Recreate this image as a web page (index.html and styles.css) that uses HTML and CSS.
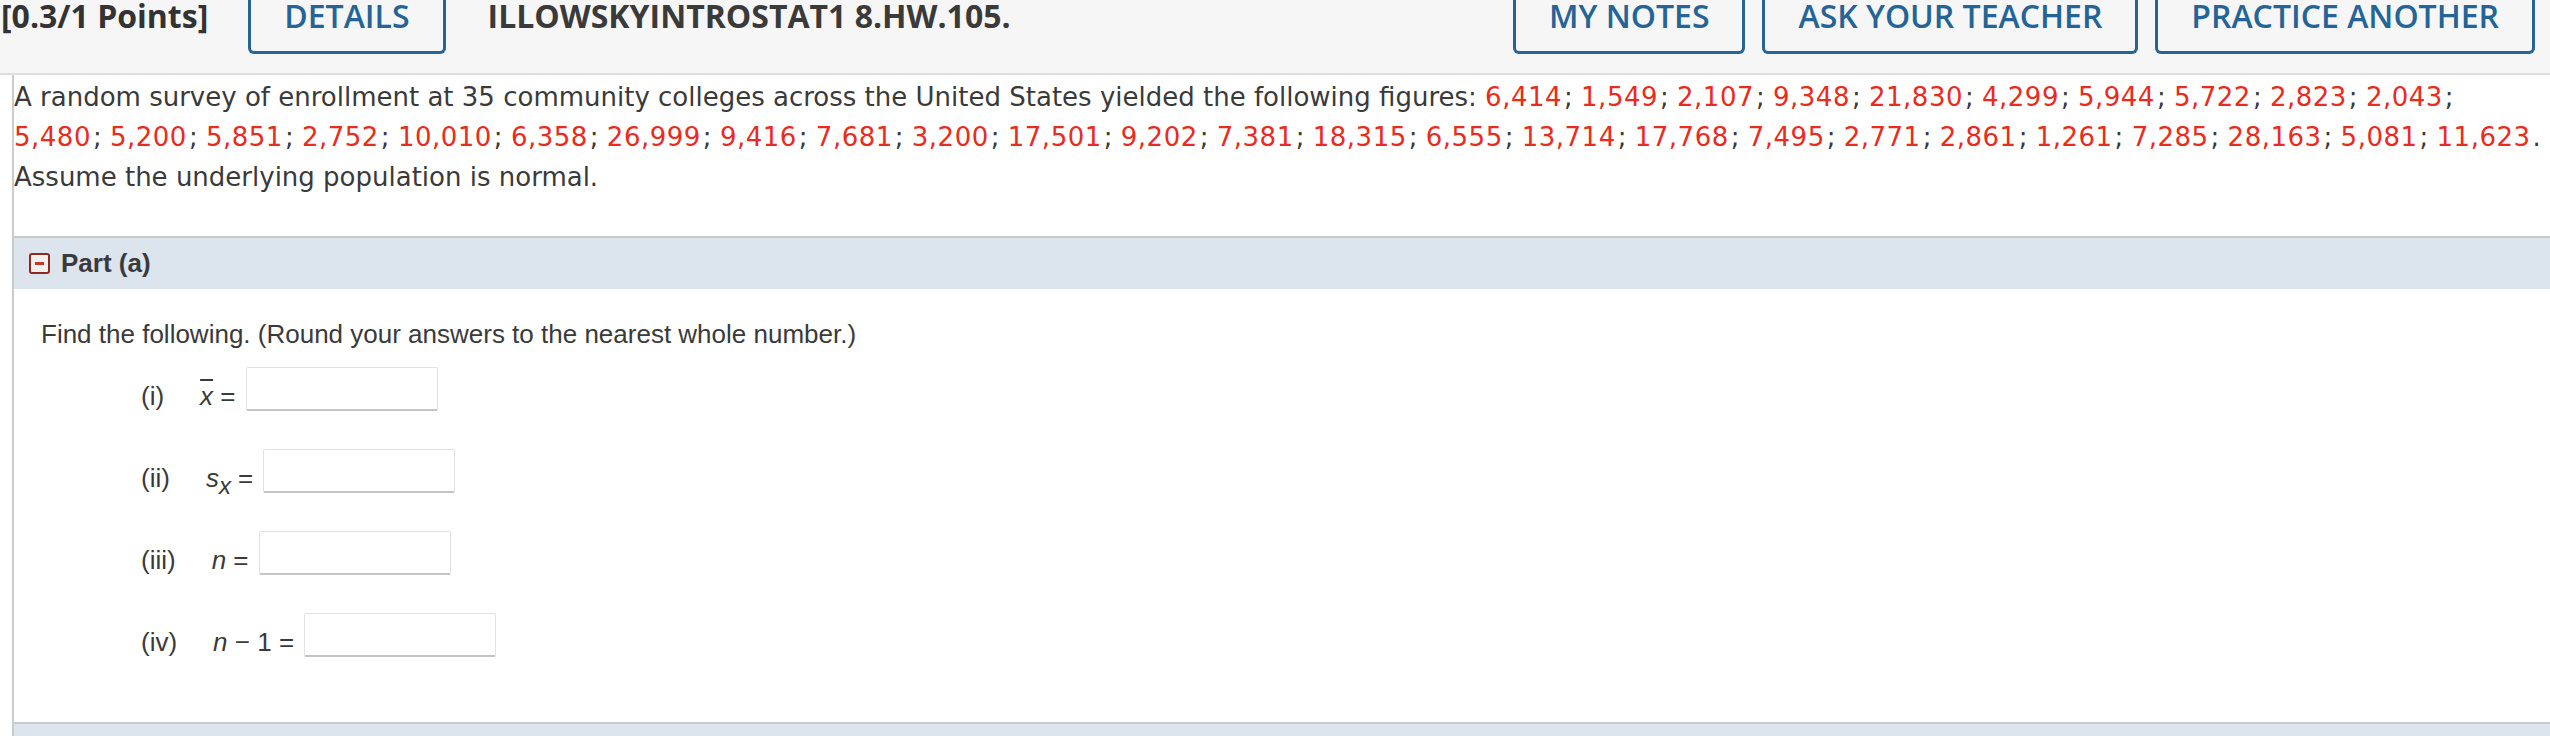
FILE: index.html
```html
<!DOCTYPE html>
<html lang="en">
<head>
  <meta charset="UTF-8">
  <meta name="viewport" content="width=device-width, initial-scale=1.0">
  <title>ILLOWSKYINTROSTAT1 8.HW.105.</title>
  <link rel="stylesheet" href="styles.css">
</head>
<body>

  <div class="qhead">
    <span class="points">[0.3/1 Points]</span>
    <a class="hbtn details" href="#">DETAILS</a>
    <span class="qid">ILLOWSKYINTROSTAT1 8.HW.105.</span>
    <div class="hactions">
      <a class="hbtn" href="#">MY NOTES</a>
      <a class="hbtn" href="#">ASK YOUR TEACHER</a>
      <a class="hbtn" href="#">PRACTICE ANOTHER</a>
    </div>
  </div>

  <div class="qbody">
    <p class="stem">
      A random survey of enrollment at 35 community colleges across the United States yielded the following figures:
      <span class="num">6,414</span>; <span class="num">1,549</span>; <span class="num">2,107</span>; <span class="num">9,348</span>; <span class="num">21,830</span>; <span class="num">4,299</span>; <span class="num">5,944</span>; <span class="num">5,722</span>; <span class="num">2,823</span>; <span class="num">2,043</span>;<br>
      <span class="num">5,480</span>; <span class="num">5,200</span>; <span class="num">5,851</span>; <span class="num">2,752</span>; <span class="num">10,010</span>; <span class="num">6,358</span>; <span class="num">26,999</span>; <span class="num">9,416</span>; <span class="num">7,681</span>; <span class="num">3,200</span>; <span class="num">17,501</span>; <span class="num">9,202</span>; <span class="num">7,381</span>; <span class="num">18,315</span>; <span class="num">6,555</span>; <span class="num">13,714</span>; <span class="num">17,768</span>; <span class="num">7,495</span>; <span class="num">2,771</span>; <span class="num">2,861</span>; <span class="num">1,261</span>; <span class="num">7,285</span>; <span class="num">28,163</span>; <span class="num">5,081</span>; <span class="num">11,623</span>.<br>
      Assume the underlying population is normal.
    </p>

    <div class="part">
      <div class="part-head">
        <span class="toggle"></span>
        Part (a)
      </div>
      <div class="part-body">
        <p class="prompt">Find the following. (Round your answers to the nearest whole number.)</p>

        <div class="row">
          <span class="lbl">(i)</span>
          <span class="math"><i class="bar">x</i> =</span>
          <input type="text" class="answer">
        </div>

        <div class="row">
          <span class="lbl">(ii)</span>
          <span class="math"><i>s</i><sub><i>x</i></sub> =</span>
          <input type="text" class="answer">
        </div>

        <div class="row">
          <span class="lbl">(iii)</span>
          <span class="math"><i>n</i> =</span>
          <input type="text" class="answer">
        </div>

        <div class="row">
          <span class="lbl">(iv)</span>
          <span class="math"><i>n</i> &minus; 1 =</span>
          <input type="text" class="answer">
        </div>
      </div>
    </div>

    <div class="part-head collapsed"></div>
  </div>

</body>
</html>
```

FILE: styles.css
```css
body {
  margin: 0;
  background-color: #fff;
  color: #3a3a3a;
  overflow: hidden;
}

/* question header */
.qhead {
  display: flex;
  align-items: flex-start;
  height: 73px;
  background-color: #f6f6f6;
  border-bottom: 2px solid #dedede;
  font-family: "Open Sans", sans-serif;
  font-size: 32px;
  line-height: 32px;
}

.points {
  padding-left: 1px;
  font-weight: bold;
  color: #333;
}

.qid {
  margin-left: 42px;
  font-weight: bold;
  color: #3a3a3a;
}

.hbtn {
  display: block;
  height: 51px;
  padding: 0 33px;
  border: 3px solid #246496;
  border-top: none;
  border-radius: 0 0 6px 6px;
  color: #246496;
  font-weight: 600;
  text-decoration: none;
}

.details {
  margin-left: 40px;
}

.hactions {
  display: flex;
  gap: 17px;
  margin-left: auto;
  margin-right: 15px;
}

/* question body */
.qbody {
  margin-left: 12px;
  border-left: 2px solid #cccccc;
  padding-top: 2px;
}

.stem {
  margin: 0 0 39px 0;
  font-family: "DejaVu Sans", Verdana, sans-serif;
  font-size: 26px;
  line-height: 40px;
  white-space: nowrap;
}

.num {
  color: #e92b20;
  letter-spacing: 0.5px;
  margin-right: 2px;
}

.part-head {
  display: flex;
  align-items: center;
  height: 51px;
  padding-left: 15px;
  background-color: #dce5ee;
  border-top: 2px solid #c8c8c8;
  font-family: "Liberation Sans", Arial, sans-serif;
  font-size: 26px;
  font-weight: bold;
  color: #3a3a3a;
}

.toggle {
  position: relative;
  width: 17px;
  height: 17px;
  margin-right: 11px;
  border: 2px solid #8c2a22;
  border-radius: 3px;
  background-color: #f4f0ef;
}

.toggle::after {
  content: "";
  position: absolute;
  left: 4px;
  top: 7px;
  width: 9px;
  height: 3px;
  background-color: #c0392b;
}

.part-body {
  padding: 30px 0 65px 27px;
  font-family: "Liberation Sans", Arial, sans-serif;
  font-size: 26px;
  line-height: 30px;
  color: #3a3a3a;
}

.prompt {
  margin: 0 0 18px 0;
}

.row {
  display: flex;
  align-items: flex-end;
  margin-left: 100px;
  margin-bottom: 38px;
}

.row:last-child {
  margin-bottom: 0;
}

.lbl {
  margin-right: 36px;
}

.math {
  margin-right: 10px;
  white-space: nowrap;
}

.math sub {
  font-size: 24px;
  vertical-align: -7px;
  line-height: 0;
}

.bar {
  text-decoration: overline;
  text-decoration-thickness: 2px;
}

.answer {
  width: 192px;
  height: 44px;
  box-sizing: border-box;
  margin: 0;
  padding: 4px 8px;
  border: 1px solid #e2e2e2;
  border-bottom: 2px solid #c4c4c4;
  border-radius: 2px;
  background-color: #fff;
  font-size: 26px;
}

.collapsed {
  height: 40px;
}
```
